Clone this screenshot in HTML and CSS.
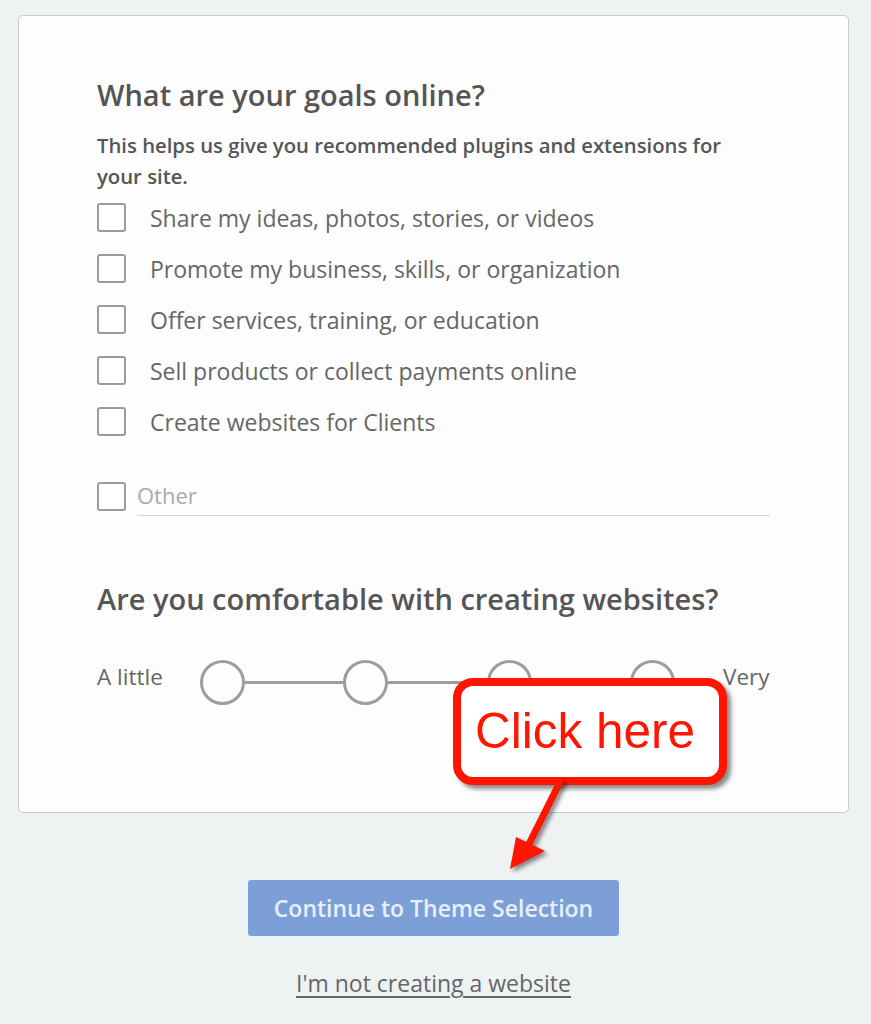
FILE: index.html
```html
<!DOCTYPE html>
<html>
<head>
<meta charset="utf-8">
<link rel="stylesheet" href="styles.css">
</head>
<body>
<div class="page">
  <div class="card">
    <h2 class="q-title">What are your goals online?</h2>
    <p class="q-sub">This helps us give you recommended plugins and extensions for your site.</p>
    <ul class="goals">
      <li class="goal"><span class="cb"></span><span class="goal-text">Share my ideas, photos, stories, or videos</span></li>
      <li class="goal"><span class="cb"></span><span class="goal-text">Promote my business, skills, or organization</span></li>
      <li class="goal"><span class="cb"></span><span class="goal-text">Offer services, training, or education</span></li>
      <li class="goal"><span class="cb"></span><span class="goal-text">Sell products or collect payments online</span></li>
      <li class="goal"><span class="cb"></span><span class="goal-text">Create websites for Clients</span></li>
    </ul>
    <div class="other">
      <span class="cb"></span>
      <div class="other-field">Other</div>
    </div>
    <h2 class="q-title q-title2">Are you comfortable with creating websites?</h2>
    <div class="scale">
      <span class="scale-label">A little</span>
      <div class="track">
        <span class="dot"></span><span class="bar"></span>
        <span class="dot"></span><span class="bar"></span>
        <span class="dot"></span><span class="bar"></span>
        <span class="dot"></span>
      </div>
      <span class="scale-label scale-right">Very</span>
    </div>
  </div>
  <div class="actions">
    <button class="continue">Continue to Theme Selection</button>
    <a class="skip" href="#">I'm not creating a website</a>
  </div>

  <div class="callout">Click here</div>
  <svg class="pointer" width="871" height="1024" viewBox="0 0 871 1024">
    <line x1="560" y1="782" x2="528" y2="846" stroke="#ff1500" stroke-width="7" stroke-linecap="round"/>
    <polygon points="510,869 516,837 545,851" fill="#ff1500"/>
  </svg>
</div>
</body>
</html>
```
FILE: styles.css
```css
* { box-sizing: border-box; }
html, body {
  margin: 0;
  padding: 0;
  background: #eff2f3;
  font-family: "Open Sans", "Noto Sans", sans-serif;
}
.page {
  position: relative;
  width: 871px;
  height: 1024px;
  padding: 15px 0 0 18px;
}
.card {
  width: 831px;
  height: 798px;
  background: #fdfdfe;
  border: 1px solid #c9cccf;
  border-radius: 5px;
  padding: 62px 0 0 78px;
}
.q-title {
  margin: 0;
  font-size: 29px;
  line-height: 34px;
  font-weight: 600;
  color: #555;
}
.q-sub {
  margin: 18px 0 0;
  width: 660px;
  font-size: 20.3px;
  line-height: 31px;
  font-weight: 600;
  color: #555;
}
.goals {
  list-style: none;
  margin: 0;
  padding: 0;
}
.goal {
  display: flex;
  align-items: center;
  height: 51px;
}
.cb {
  flex: none;
  width: 29px;
  height: 29px;
  border: 2px solid #9b9b9b;
  border-radius: 3px;
  background: #fff;
}
.goal-text {
  margin-left: 24px;
  font-size: 23px;
  color: #666;
}
.other {
  display: flex;
  align-items: center;
  margin-top: 29px;
  height: 40px;
}
.other-field {
  margin-left: 11px;
  width: 633px;
  height: 40px;
  line-height: 38px;
  border-bottom: 1px solid #d3d6d8;
  font-size: 22px;
  color: #aaa;
}
.q-title2 {
  margin-top: 66px;
}
.scale {
  display: flex;
  align-items: center;
  height: 50px;
  margin-top: 41px;
}
.scale-label {
  font-size: 22.5px;
  color: #666;
  width: 103px;
  margin-top: -12px;
}
.scale-right {
  width: auto;
  margin-left: 48px;
}
.track {
  display: flex;
  align-items: center;
  width: 475px;
}
.dot {
  flex: none;
  width: 45px;
  height: 45px;
  border: 3.5px solid #9d9d9d;
  border-radius: 50%;
  background: #fdfdfe;
}
.bar {
  flex: 1;
  height: 3px;
  background: #9d9d9d;
}
.actions {
  width: 831px;
  display: flex;
  flex-direction: column;
  align-items: center;
  padding-top: 67px;
}
.continue {
  width: 371px;
  height: 56px;
  border: none;
  border-radius: 3px;
  background: #7c9fd8;
  color: #e8effb;
  font-family: "Open Sans", "Noto Sans", sans-serif;
  font-size: 23px;
  font-weight: 600;
  padding: 0;
}
.skip {
  margin-top: 32px;
  font-size: 23px;
  line-height: 30px;
  color: #666;
  text-decoration: underline;
  text-underline-offset: 4px;
}
.callout {
  position: absolute;
  left: 453px;
  top: 678px;
  width: 274px;
  height: 107px;
  border: 8px solid #ff1500;
  border-radius: 20px;
  background: #fff;
  color: #ff1500;
  font-family: "Liberation Sans", Arial, sans-serif;
  font-size: 49.5px;
  line-height: 89px;
  text-align: center;
  padding-right: 10px;
  box-shadow: 4px 4px 4px rgba(0,0,0,0.45);
}
.pointer {
  position: absolute;
  left: 0;
  top: 0;
  filter: drop-shadow(3px 3px 2px rgba(0,0,0,0.45));
  pointer-events: none;
}
```
